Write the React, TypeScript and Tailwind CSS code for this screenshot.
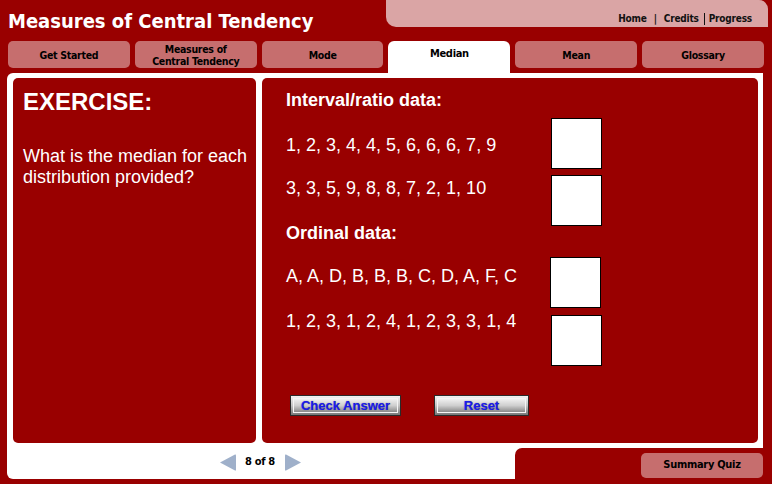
import React from "react";

const narrow = "font-['DejaVu_Sans_Condensed','DejaVu_Sans',sans-serif] [font-stretch:condensed]";

type TabProps = { label: React.ReactNode; active?: boolean };

const Tab = ({ label, active }: TabProps) => {
  if (active) {
    return (
      <div className="flex-1 h-[32px] rounded-t-[6px] bg-white">
        <div className="flex h-[27px] items-center justify-center text-[11px] font-bold tracking-[-0.3px] text-black">
          {label}
        </div>
      </div>
    );
  }
  return (
    <div className="flex-1 h-[27px] rounded-[5px] bg-[#c66e6e] flex items-center justify-center text-center text-[10.5px] font-bold leading-[12px] tracking-[-0.3px] text-black">
      {label}
    </div>
  );
};

const AnswerBox = ({ className }: { className: string }) => (
  <div className={"w-[51px] h-[51px] border border-black bg-white " + className} />
);

const MetalButton = ({ label, width }: { label: string; width: string }) => (
  <button className={"h-[21px] border border-[#2a2a2a] bg-linear-to-b from-[#f2f2f2] via-[#c4c4c4] to-[#777] p-[2px] " + width}>
    <span className="flex h-full w-full items-center justify-center border border-[#f4f4f4] bg-linear-to-b from-[#f0f0f0] via-[#cfcfcf] to-[#8a8a8a] text-[13px] font-bold leading-none text-[#1a1aef] [text-shadow:0_0_1px_#555]">
      {label}
    </span>
  </button>
);

const Arrow = ({ dir }: { dir: "left" | "right" }) => (
  <svg width="18" height="19" viewBox="0 0 18 19">
    {dir === "left" ? (
      <path d="M1 9.5 L16 1.5 Q17 1 17 2.5 L17 16.5 Q17 18 16 17.5 Z" fill="#9fb0ca" />
    ) : (
      <path d="M17 9.5 L2 1.5 Q1 1 1 2.5 L1 16.5 Q1 18 2 17.5 Z" fill="#9fb0ca" />
    )}
  </svg>
);

export default function App() {
  return (
    <div className="relative w-[772px] h-[484px] overflow-hidden bg-[#990000] font-['Liberation_Sans',Arial,sans-serif]">
      {/* header */}
      <div className="flex h-[41px]">
        <h1 className={"pl-[8px] pt-[9px] text-[20px] font-bold leading-[24px] text-white " + narrow}>
          Measures of Central Tendency
        </h1>
        <div className="ml-auto mr-[4px] h-[27px] w-[382px] rounded-bl-[10px] rounded-tr-[9px] bg-[#daa5a5]">
          <div className={"flex items-center justify-end pr-[16px] pt-[13px] text-[10px] font-bold leading-[12px] tracking-[-0.2px] text-[#111] " + narrow}>
            <span>Home</span>
            <span className="ml-[7px] mr-[7px]">|</span>
            <span>Credits</span>
            <span className="ml-[5px] mr-[4px] h-[12px] w-[1px] bg-[#111]" />
            <span>Progress</span>
          </div>
        </div>
      </div>

      {/* tabs */}
      <div className={"flex items-start gap-[5px] px-[8px] h-[32px] " + narrow}>
        <Tab label="Get Started" />
        <Tab label={<span>Measures of<br />Central Tendency</span>} />
        <Tab label="Mode" />
        <Tab label="Median" active />
        <Tab label="Mean" />
        <Tab label="Glossary" />
      </div>

      {/* content */}
      <div className="mx-[7px] w-[756px] h-[406px] rounded-[6px] rounded-tr-none bg-white pl-[6px] pr-[5px] pt-[5px]">
        <div className="flex gap-[6px] h-[365px]">
          <div className="w-[243px] rounded-[5px] bg-[#990000] pl-[10px] pt-[10px] text-white">
            <p className="text-[24px] font-bold leading-[28px]">EXERCISE:</p>
            <p className="mt-[30px] w-[228px] text-[18px] leading-[21px]">
              What is the median for each distribution provided?
            </p>
          </div>
          <div className="w-[496px] rounded-[5px] bg-[#990000] pl-[24px] pt-[11px] text-white">
            <div className="flex">
              <div className="w-[265px] text-[18px] leading-[22px]">
                <p className="font-bold">Interval/ratio data:</p>
                <p className="mt-[23px]">1, 2, 3, 4, 4, 5, 6, 6, 6, 7, 9</p>
                <p className="mt-[21px]">3, 3, 5, 9, 8, 8, 7, 2, 1, 10</p>
                <p className="mt-[23px] font-bold">Ordinal data:</p>
                <p className="mt-[21px]">A, A, D, B, B, B, C, D, A, F, C</p>
                <p className="mt-[23px]">1, 2, 3, 1, 2, 4, 1, 2, 3, 3, 1, 4</p>
              </div>
              <div className="flex flex-col">
                <AnswerBox className="mt-[29px]" />
                <AnswerBox className="mt-[6px]" />
                <AnswerBox className="mt-[31px] -ml-[1px]" />
                <AnswerBox className="mt-[7px]" />
              </div>
            </div>
            <div className="mt-[29px] ml-[4px] flex gap-[33px]">
              <MetalButton label="Check Answer" width="w-[111px]" />
              <MetalButton label="Reset" width="w-[95px]" />
            </div>
          </div>
        </div>
        <div className={"flex h-[36px] items-center pl-[206px] pt-[3px] " + narrow}>
          <Arrow dir="left" />
          <span className="ml-[8px] text-[11px] font-bold tracking-[-0.3px] text-black">8 of 8</span>
          <span className="ml-[9px] flex">
            <Arrow dir="right" />
          </span>
        </div>
      </div>

      {/* bottom right tab */}
      <div className={"absolute left-[515px] top-[448px] flex h-[36px] w-[257px] justify-end rounded-tl-[7px] bg-[#990000] pr-[9px] pt-[5px] " + narrow}>
        <div className="flex h-[25px] w-[122px] items-center justify-center rounded-[5px] bg-[#c66e6e] text-[11px] font-bold tracking-[-0.3px] text-black">
          Summary Quiz
        </div>
      </div>
    </div>
  );
}
